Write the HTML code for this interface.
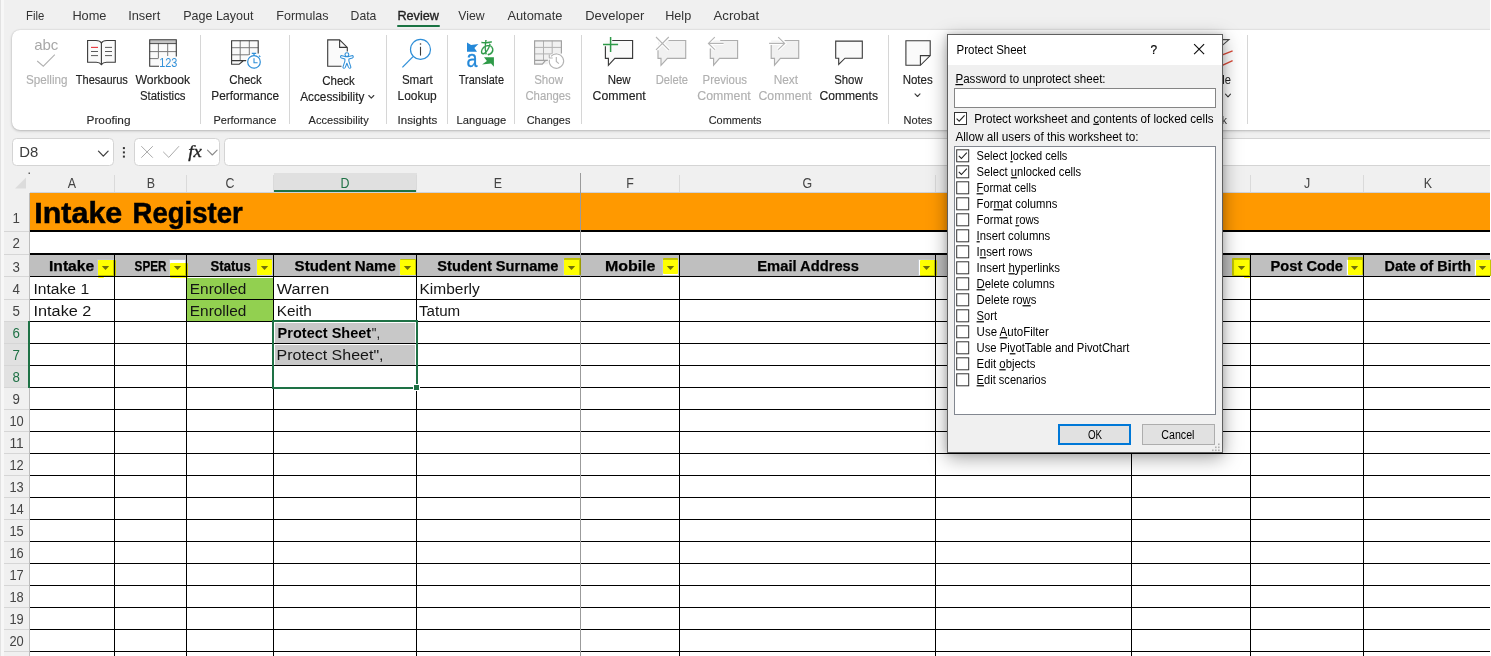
<!DOCTYPE html>
<html lang="en"><head><meta charset="utf-8"><title>Intake Register - Excel</title>
<style>
html,body{margin:0;padding:0;}
body{width:1491px;height:656px;overflow:hidden;background:#f0f0f0;position:relative;font-family:"Liberation Sans", sans-serif;}
#app div{position:absolute;box-sizing:border-box;}
#app{position:absolute;left:0;top:0;width:1491px;height:656px;overflow:hidden;}
svg{position:absolute;left:0;top:0;overflow:hidden;}
svg text{font-family:"Liberation Sans", sans-serif;white-space:pre;}
</style></head><body><div id="app">
<div style="left:0px;top:0px;width:1491px;height:656px;background:#f0f0f0;"></div>
<div style="left:0px;top:0px;width:1.3px;height:656px;background:#e2e2e2;"></div>
<div style="left:1.3px;top:0px;width:3px;height:656px;background:#f7f7f7;"></div>
<div style="left:12px;top:30px;width:1491px;height:99.5px;background:#ffffff;border-radius:8px 0 0 8px;box-shadow:0 1px 3px rgba(0,0,0,0.22),0 0 1.5px rgba(0,0,0,0.16);"></div>
<div style="left:200.0px;top:35px;width:1px;height:88.5px;background:#d6d6d6;"></div>
<div style="left:289.0px;top:35px;width:1px;height:88.5px;background:#d6d6d6;"></div>
<div style="left:386.0px;top:35px;width:1px;height:88.5px;background:#d6d6d6;"></div>
<div style="left:446.5px;top:35px;width:1px;height:88.5px;background:#d6d6d6;"></div>
<div style="left:514.0px;top:35px;width:1px;height:88.5px;background:#d6d6d6;"></div>
<div style="left:581.0px;top:35px;width:1px;height:88.5px;background:#d6d6d6;"></div>
<div style="left:888.0px;top:35px;width:1px;height:88.5px;background:#d6d6d6;"></div>
<div style="left:1246.8px;top:35px;width:1px;height:88.5px;background:#d6d6d6;"></div>
<div style="left:397px;top:24.6px;width:42.5px;height:2.2px;background:#1a7343;border-radius:1px;"></div>
<div style="left:12px;top:138px;width:102px;height:27.5px;background:#fff;border:1px solid #d4d4d4;border-radius:4.5px;"></div>
<div style="left:134px;top:138px;width:85.5px;height:27.5px;background:#fff;border:1px solid #d4d4d4;border-radius:4.5px;"></div>
<div style="left:224px;top:138px;width:1491px;height:27.5px;background:#fff;border:1px solid #d4d4d4;border-radius:4.5px;"></div>
<div style="left:4.3px;top:173px;width:1491px;height:20px;background:#f0f0f0;"></div>
<div style="left:273.5px;top:173px;width:143px;height:19px;background:#e0e0e0;"></div>
<div style="left:273.5px;top:190.3px;width:143px;height:2.2px;background:#1e7145;"></div>
<div style="left:114px;top:175px;width:1px;height:17px;background:#dadada;"></div>
<div style="left:186px;top:175px;width:1px;height:17px;background:#dadada;"></div>
<div style="left:273px;top:175px;width:1px;height:17px;background:#dadada;"></div>
<div style="left:416px;top:175px;width:1px;height:17px;background:#dadada;"></div>
<div style="left:679px;top:175px;width:1px;height:17px;background:#dadada;"></div>
<div style="left:935px;top:175px;width:1px;height:17px;background:#dadada;"></div>
<div style="left:1131px;top:175px;width:1px;height:17px;background:#dadada;"></div>
<div style="left:1250px;top:175px;width:1px;height:17px;background:#dadada;"></div>
<div style="left:1363px;top:175px;width:1px;height:17px;background:#dadada;"></div>
<div style="left:30px;top:192px;width:1491px;height:1px;background:#cfd3d8;"></div>
<div style="left:30px;top:193px;width:1491px;height:656px;background:#ffffff;"></div>
<div style="left:30px;top:193px;width:1491px;height:37px;background:#ff9900;"></div>
<div style="left:30px;top:229.8px;width:1491px;height:2.2px;background:#000;"></div>
<div style="left:30px;top:255px;width:1491px;height:21px;background:#bfbfbf;"></div>
<div style="left:30px;top:252.8px;width:1491px;height:2.2px;background:#000;"></div>
<div style="left:30px;top:275.5px;width:1491px;height:1.9px;background:#000;"></div>
<div style="left:187px;top:277.5px;width:86px;height:44px;background:#92d050;"></div>
<div style="left:275px;top:323px;width:140px;height:20px;background:#c8c8c8;"></div>
<div style="left:275px;top:345px;width:140px;height:20px;background:#c8c8c8;"></div>
<div style="left:4.3px;top:321.5px;width:25px;height:66px;background:#e1e1e1;"></div>
<div style="left:4.3px;top:231px;width:25px;height:1px;background:#d6d6d6;"></div>
<div style="left:4.3px;top:254px;width:25px;height:1px;background:#d6d6d6;"></div>
<div style="left:4.3px;top:276px;width:25px;height:1px;background:#d6d6d6;"></div>
<div style="left:4.3px;top:299px;width:25px;height:1px;background:#d6d6d6;"></div>
<div style="left:4.3px;top:321px;width:25px;height:1px;background:#d6d6d6;"></div>
<div style="left:4.3px;top:343px;width:25px;height:1px;background:#d6d6d6;"></div>
<div style="left:4.3px;top:365px;width:25px;height:1px;background:#d6d6d6;"></div>
<div style="left:4.3px;top:387px;width:25px;height:1px;background:#d6d6d6;"></div>
<div style="left:4.3px;top:409px;width:25px;height:1px;background:#d6d6d6;"></div>
<div style="left:4.3px;top:431px;width:25px;height:1px;background:#d6d6d6;"></div>
<div style="left:4.3px;top:453px;width:25px;height:1px;background:#d6d6d6;"></div>
<div style="left:4.3px;top:475px;width:25px;height:1px;background:#d6d6d6;"></div>
<div style="left:4.3px;top:497px;width:25px;height:1px;background:#d6d6d6;"></div>
<div style="left:4.3px;top:519px;width:25px;height:1px;background:#d6d6d6;"></div>
<div style="left:4.3px;top:541px;width:25px;height:1px;background:#d6d6d6;"></div>
<div style="left:4.3px;top:563px;width:25px;height:1px;background:#d6d6d6;"></div>
<div style="left:4.3px;top:585px;width:25px;height:1px;background:#d6d6d6;"></div>
<div style="left:4.3px;top:607px;width:25px;height:1px;background:#d6d6d6;"></div>
<div style="left:4.3px;top:629px;width:25px;height:1px;background:#d6d6d6;"></div>
<div style="left:4.3px;top:651px;width:25px;height:1px;background:#d6d6d6;"></div>
<div style="left:29px;top:193px;width:1px;height:656px;background:#bcbcbc;"></div>
<div style="left:28.3px;top:321px;width:1.8px;height:67px;background:#1e7145;"></div>
<div style="left:30px;top:299px;width:1491px;height:1px;background:#000;"></div>
<div style="left:30px;top:321px;width:1491px;height:1px;background:#000;"></div>
<div style="left:30px;top:343px;width:1491px;height:1px;background:#000;"></div>
<div style="left:30px;top:365px;width:1491px;height:1px;background:#000;"></div>
<div style="left:30px;top:387px;width:1491px;height:1px;background:#000;"></div>
<div style="left:30px;top:409px;width:1491px;height:1px;background:#000;"></div>
<div style="left:30px;top:431px;width:1491px;height:1px;background:#000;"></div>
<div style="left:30px;top:453px;width:1491px;height:1px;background:#000;"></div>
<div style="left:30px;top:475px;width:1491px;height:1px;background:#000;"></div>
<div style="left:30px;top:497px;width:1491px;height:1px;background:#000;"></div>
<div style="left:30px;top:519px;width:1491px;height:1px;background:#000;"></div>
<div style="left:30px;top:541px;width:1491px;height:1px;background:#000;"></div>
<div style="left:30px;top:563px;width:1491px;height:1px;background:#000;"></div>
<div style="left:30px;top:585px;width:1491px;height:1px;background:#000;"></div>
<div style="left:30px;top:607px;width:1491px;height:1px;background:#000;"></div>
<div style="left:30px;top:629px;width:1491px;height:1px;background:#000;"></div>
<div style="left:30px;top:651px;width:1491px;height:1px;background:#000;"></div>
<div style="left:114px;top:254px;width:1px;height:656px;background:#000;"></div>
<div style="left:186px;top:254px;width:1px;height:656px;background:#000;"></div>
<div style="left:273px;top:254px;width:1px;height:656px;background:#000;"></div>
<div style="left:416px;top:254px;width:1px;height:656px;background:#000;"></div>
<div style="left:679px;top:254px;width:1px;height:656px;background:#000;"></div>
<div style="left:935px;top:254px;width:1px;height:656px;background:#000;"></div>
<div style="left:1131px;top:254px;width:1px;height:656px;background:#000;"></div>
<div style="left:1250px;top:254px;width:1px;height:656px;background:#000;"></div>
<div style="left:1363px;top:254px;width:1px;height:656px;background:#000;"></div>
<div style="left:580px;top:173px;width:1px;height:656px;background:#9b9b9b;"></div>
<div style="left:1490.2px;top:0px;width:1px;height:656px;background:#ffffff;"></div>
<div style="left:97.3px;top:259.3px;width:16.9px;height:16.7px;background:#fff;border:1px solid #c3c7ce;"></div>
<div style="left:169.3px;top:259.3px;width:16.9px;height:16.7px;background:#fff;border:1px solid #c3c7ce;"></div>
<div style="left:256.3px;top:259.3px;width:16.9px;height:16.7px;background:#fff;border:1px solid #c3c7ce;"></div>
<div style="left:399.3px;top:259.3px;width:16.9px;height:16.7px;background:#fff;border:1px solid #c3c7ce;"></div>
<div style="left:563.3px;top:259.3px;width:16.9px;height:16.7px;background:#fff;border:1px solid #c3c7ce;"></div>
<div style="left:662.3px;top:259.3px;width:16.9px;height:16.7px;background:#fff;border:1px solid #c3c7ce;"></div>
<div style="left:918.3px;top:259.3px;width:16.9px;height:16.7px;background:#fff;border:1px solid #c3c7ce;"></div>
<div style="left:1233.3px;top:259.3px;width:16.9px;height:16.7px;background:#fff;border:1px solid #c3c7ce;"></div>
<div style="left:1346.3px;top:259.3px;width:16.9px;height:16.7px;background:#fff;border:1px solid #c3c7ce;"></div>
<div style="left:1474.3px;top:259.3px;width:16.9px;height:16.7px;background:#fff;border:1px solid #c3c7ce;"></div>
<div style="left:97.7px;top:260.1px;width:18.1px;height:16.1px;background:#ffff00;mix-blend-mode:multiply;border-radius:1px;"></div>
<div style="left:97.7px;top:276px;width:6.5px;height:1.8px;background:#ffff00;mix-blend-mode:multiply;border-radius:1px;"></div>
<div style="left:170px;top:262.8px;width:18px;height:15.7px;background:#ffff00;mix-blend-mode:multiply;border-radius:1px;"></div>
<div style="left:256.8px;top:259.1px;width:15.7px;height:16.4px;background:#ffff00;mix-blend-mode:multiply;border-radius:1px;"></div>
<div style="left:400px;top:259.1px;width:15.8px;height:16.4px;background:#ffff00;mix-blend-mode:multiply;border-radius:1px;"></div>
<div style="left:563.9px;top:258.3px;width:16.7px;height:17.2px;background:#ffff00;mix-blend-mode:multiply;border-radius:1px;"></div>
<div style="left:662.9px;top:258.3px;width:15.3px;height:15.9px;background:#ffff00;mix-blend-mode:multiply;border-radius:1px;"></div>
<div style="left:919.8px;top:259.8px;width:17.3px;height:16.2px;background:#ffff00;mix-blend-mode:multiply;border-radius:1px;"></div>
<div style="left:1232.1px;top:258px;width:17.9px;height:18px;background:#ffff00;mix-blend-mode:multiply;border-radius:1px;"></div>
<div style="left:1244px;top:276.5px;width:7px;height:1.5px;background:#ffff00;mix-blend-mode:multiply;border-radius:1px;"></div>
<div style="left:1347.9px;top:256.9px;width:15.2px;height:18px;background:#ffff00;mix-blend-mode:multiply;border-radius:1px;"></div>
<div style="left:1475.9px;top:259.8px;width:16px;height:16.2px;background:#ffff00;mix-blend-mode:multiply;border-radius:1px;"></div>
<div style="left:272.3px;top:320.2px;width:145.5px;height:68.5px;background:transparent;border:2px solid #1e7145;"></div>
<div style="left:413px;top:384.3px;width:6.5px;height:6.5px;background:#fff;"></div>
<div style="left:414px;top:385.3px;width:5px;height:5px;background:#1e7145;"></div>
<svg width="1491" height="656" viewBox="0 0 1491 656">
<text x="26.0" y="20.1" font-size="13" fill="#333333" textLength="18.3" lengthAdjust="spacingAndGlyphs">File</text>
<text x="72.4" y="20.1" font-size="13" fill="#333333" textLength="34.1" lengthAdjust="spacingAndGlyphs">Home</text>
<text x="128.2" y="20.1" font-size="13" fill="#333333" textLength="32.0" lengthAdjust="spacingAndGlyphs">Insert</text>
<text x="183.2" y="20.1" font-size="13" fill="#333333" textLength="70.3" lengthAdjust="spacingAndGlyphs">Page Layout</text>
<text x="276.3" y="20.1" font-size="13" fill="#333333" textLength="52.3" lengthAdjust="spacingAndGlyphs">Formulas</text>
<text x="350.6" y="20.1" font-size="13" fill="#333333" textLength="25.8" lengthAdjust="spacingAndGlyphs">Data</text>
<text x="458.3" y="20.1" font-size="13" fill="#333333" textLength="26.3" lengthAdjust="spacingAndGlyphs">View</text>
<text x="507.4" y="20.1" font-size="13" fill="#333333" textLength="55.0" lengthAdjust="spacingAndGlyphs">Automate</text>
<text x="585.2" y="20.1" font-size="13" fill="#333333" textLength="59.1" lengthAdjust="spacingAndGlyphs">Developer</text>
<text x="665.2" y="20.1" font-size="13" fill="#333333" textLength="26.0" lengthAdjust="spacingAndGlyphs">Help</text>
<text x="713.5" y="20.1" font-size="13" fill="#333333" textLength="45.6" lengthAdjust="spacingAndGlyphs">Acrobat</text>
<text x="397.4" y="20.1" font-size="13" fill="#1f1f1f" textLength="41.6" lengthAdjust="spacingAndGlyphs" stroke="#1f1f1f" stroke-width="0.35">Review</text>
<text x="26.0" y="83.8" font-size="12.3" fill="#b0b0b0" textLength="41.5" lengthAdjust="spacingAndGlyphs" stroke="#b0b0b0" stroke-width="0.15">Spelling</text>
<text x="75.8" y="83.8" font-size="12.3" fill="#222222" textLength="52.1" lengthAdjust="spacingAndGlyphs" stroke="#222222" stroke-width="0.15">Thesaurus</text>
<text x="135.5" y="83.8" font-size="12.3" fill="#222222" textLength="54.5" lengthAdjust="spacingAndGlyphs" stroke="#222222" stroke-width="0.15">Workbook</text>
<text x="140.0" y="99.8" font-size="12.3" fill="#222222" textLength="45.5" lengthAdjust="spacingAndGlyphs" stroke="#222222" stroke-width="0.15">Statistics</text>
<text x="229.2" y="83.8" font-size="12.3" fill="#222222" textLength="32.6" lengthAdjust="spacingAndGlyphs" stroke="#222222" stroke-width="0.15">Check</text>
<text x="211.3" y="99.8" font-size="12.3" fill="#222222" textLength="67.7" lengthAdjust="spacingAndGlyphs" stroke="#222222" stroke-width="0.15">Performance</text>
<text x="322.2" y="84.7" font-size="12.3" fill="#222222" textLength="32.6" lengthAdjust="spacingAndGlyphs" stroke="#222222" stroke-width="0.15">Check</text>
<text x="300.2" y="100.6" font-size="12.3" fill="#222222" textLength="64.2" lengthAdjust="spacingAndGlyphs" stroke="#222222" stroke-width="0.15">Accessibility</text>
<text x="401.9" y="83.8" font-size="12.3" fill="#222222" textLength="30.8" lengthAdjust="spacingAndGlyphs" stroke="#222222" stroke-width="0.15">Smart</text>
<text x="397.5" y="99.8" font-size="12.3" fill="#222222" textLength="39.2" lengthAdjust="spacingAndGlyphs" stroke="#222222" stroke-width="0.15">Lookup</text>
<text x="458.8" y="83.8" font-size="12.3" fill="#222222" textLength="45.2" lengthAdjust="spacingAndGlyphs" stroke="#222222" stroke-width="0.15">Translate</text>
<text x="534.2" y="83.8" font-size="12.3" fill="#b0b0b0" textLength="28.8" lengthAdjust="spacingAndGlyphs" stroke="#b0b0b0" stroke-width="0.15">Show</text>
<text x="525.4" y="99.8" font-size="12.3" fill="#b0b0b0" textLength="45.4" lengthAdjust="spacingAndGlyphs" stroke="#b0b0b0" stroke-width="0.15">Changes</text>
<text x="607.7" y="83.8" font-size="12.3" fill="#222222" textLength="22.9" lengthAdjust="spacingAndGlyphs" stroke="#222222" stroke-width="0.15">New</text>
<text x="592.6" y="99.8" font-size="12.3" fill="#222222" textLength="53.2" lengthAdjust="spacingAndGlyphs" stroke="#222222" stroke-width="0.15">Comment</text>
<text x="655.7" y="83.8" font-size="12.3" fill="#b0b0b0" textLength="32.3" lengthAdjust="spacingAndGlyphs" stroke="#b0b0b0" stroke-width="0.15">Delete</text>
<text x="702.6" y="83.8" font-size="12.3" fill="#b0b0b0" textLength="44.4" lengthAdjust="spacingAndGlyphs" stroke="#b0b0b0" stroke-width="0.15">Previous</text>
<text x="697.3" y="99.8" font-size="12.3" fill="#b0b0b0" textLength="53.4" lengthAdjust="spacingAndGlyphs" stroke="#b0b0b0" stroke-width="0.15">Comment</text>
<text x="773.7" y="83.8" font-size="12.3" fill="#b0b0b0" textLength="24.4" lengthAdjust="spacingAndGlyphs" stroke="#b0b0b0" stroke-width="0.15">Next</text>
<text x="758.5" y="99.8" font-size="12.3" fill="#b0b0b0" textLength="53.2" lengthAdjust="spacingAndGlyphs" stroke="#b0b0b0" stroke-width="0.15">Comment</text>
<text x="834.2" y="83.8" font-size="12.3" fill="#222222" textLength="28.4" lengthAdjust="spacingAndGlyphs" stroke="#222222" stroke-width="0.15">Show</text>
<text x="819.4" y="99.8" font-size="12.3" fill="#222222" textLength="58.6" lengthAdjust="spacingAndGlyphs" stroke="#222222" stroke-width="0.15">Comments</text>
<text x="902.7" y="83.8" font-size="12.3" fill="#222222" textLength="30.0" lengthAdjust="spacingAndGlyphs" stroke="#222222" stroke-width="0.15">Notes</text>
<text x="86.5" y="123.5" font-size="11.8" fill="#262626" textLength="44.0" lengthAdjust="spacingAndGlyphs" stroke="#262626" stroke-width="0.12">Proofing</text>
<text x="213.5" y="123.5" font-size="11.8" fill="#262626" textLength="62.8" lengthAdjust="spacingAndGlyphs" stroke="#262626" stroke-width="0.12">Performance</text>
<text x="308.6" y="123.5" font-size="11.8" fill="#262626" textLength="60.1" lengthAdjust="spacingAndGlyphs" stroke="#262626" stroke-width="0.12">Accessibility</text>
<text x="397.5" y="123.5" font-size="11.8" fill="#262626" textLength="39.8" lengthAdjust="spacingAndGlyphs" stroke="#262626" stroke-width="0.12">Insights</text>
<text x="456.6" y="123.5" font-size="11.8" fill="#262626" textLength="49.7" lengthAdjust="spacingAndGlyphs" stroke="#262626" stroke-width="0.12">Language</text>
<text x="526.7" y="123.5" font-size="11.8" fill="#262626" textLength="43.7" lengthAdjust="spacingAndGlyphs" stroke="#262626" stroke-width="0.12">Changes</text>
<text x="708.7" y="123.5" font-size="11.8" fill="#262626" textLength="52.8" lengthAdjust="spacingAndGlyphs" stroke="#262626" stroke-width="0.12">Comments</text>
<text x="903.6" y="123.5" font-size="11.8" fill="#262626" textLength="28.8" lengthAdjust="spacingAndGlyphs" stroke="#262626" stroke-width="0.12">Notes</text>
<text x="1208.0" y="83.8" font-size="12.3" fill="#222222" textLength="23.0" lengthAdjust="spacingAndGlyphs">Hide</text>
<text x="1213.0" y="123.5" font-size="11.8" fill="#3a3a3a" textLength="14.0" lengthAdjust="spacingAndGlyphs">Ink</text>
<path d="M368.8 95.5 L371.3 98.1 L373.8 95.5" fill="none" stroke="#3a3a3a" stroke-width="1.1" stroke-linecap="round" stroke-linejoin="round"/>
<path d="M915.0 93.9 L917.5 96.5 L920.0 93.9" fill="none" stroke="#3a3a3a" stroke-width="1.1" stroke-linecap="round" stroke-linejoin="round"/>
<path d="M1225.5 94.2 L1228.0 96.8 L1230.5 94.2" fill="none" stroke="#3a3a3a" stroke-width="1.1" stroke-linecap="round" stroke-linejoin="round"/>
<text x="19.3" y="156.7" font-size="14.4" fill="#3b3b3b" textLength="19.0" lengthAdjust="spacingAndGlyphs">D8</text>
<path d="M98.5 151.1 L103.3 156.1 L108.1 151.1" fill="none" stroke="#404040" stroke-width="1.3" stroke-linecap="round" stroke-linejoin="round"/>
<rect x="122.9" y="147.1" width="2" height="2" fill="#333"/>
<rect x="122.9" y="151.4" width="2" height="2" fill="#333"/>
<rect x="122.9" y="155.6" width="2" height="2" fill="#333"/>
<path d="M141.3 146.2 L152.8 157.7 M152.8 146.2 L141.3 157.7" stroke="#ababab" stroke-width="1" fill="none"/>
<path d="M163.2 151.8 L168.8 157.4 L179 146.2" stroke="#ababab" stroke-width="1" fill="none"/>
<text x="188.3" y="156.9" font-size="17.5" fill="#222" style='font-family:"Liberation Serif", serif' font-style="italic" textLength="13.5" lengthAdjust="spacingAndGlyphs" stroke="#222" stroke-width="0.35">fx</text>
<path d="M207.5 150.2 L212.3 155.0 L217.1 150.2" fill="none" stroke="#8a8a8a" stroke-width="1.1" stroke-linecap="round" stroke-linejoin="round"/>
<path d="M26 177.5 L26 188.5 L15 188.5 Z" fill="#dcdcdc"/>
<rect x="28.6" y="172.6" width="1.2" height="1.2" fill="#111"/>
<text x="72.0" y="187.9" font-size="13.8" fill="#444444" transform="translate(72.0 0) scale(0.9 1) translate(-72.0 0)" text-anchor="middle">A</text>
<text x="151.0" y="187.9" font-size="13.8" fill="#444444" transform="translate(151.0 0) scale(0.9 1) translate(-151.0 0)" text-anchor="middle">B</text>
<text x="230.0" y="187.9" font-size="13.8" fill="#444444" transform="translate(230.0 0) scale(0.9 1) translate(-230.0 0)" text-anchor="middle">C</text>
<text x="498.0" y="187.9" font-size="13.8" fill="#444444" transform="translate(498.0 0) scale(0.9 1) translate(-498.0 0)" text-anchor="middle">E</text>
<text x="630.0" y="187.9" font-size="13.8" fill="#444444" transform="translate(630.0 0) scale(0.9 1) translate(-630.0 0)" text-anchor="middle">F</text>
<text x="807.3" y="187.9" font-size="13.8" fill="#444444" transform="translate(807.3 0) scale(0.9 1) translate(-807.3 0)" text-anchor="middle">G</text>
<text x="1307.2" y="187.9" font-size="13.8" fill="#444444" transform="translate(1307.2 0) scale(0.9 1) translate(-1307.2 0)" text-anchor="middle">J</text>
<text x="1428.0" y="187.9" font-size="13.8" fill="#444444" transform="translate(1428.0 0) scale(0.9 1) translate(-1428.0 0)" text-anchor="middle">K</text>
<text x="345.0" y="187.9" font-size="13.8" fill="#1e7145" transform="translate(345.0 0) scale(0.9 1) translate(-345.0 0)" text-anchor="middle">D</text>
<text x="12.5" y="223.0" font-size="13.8" fill="#444444" textLength="7.4" lengthAdjust="spacingAndGlyphs">1</text>
<text x="12.5" y="248.0" font-size="13.8" fill="#444444" textLength="7.4" lengthAdjust="spacingAndGlyphs">2</text>
<text x="12.5" y="271.5" font-size="13.8" fill="#444444" textLength="7.4" lengthAdjust="spacingAndGlyphs">3</text>
<text x="12.5" y="293.5" font-size="13.8" fill="#444444" textLength="7.4" lengthAdjust="spacingAndGlyphs">4</text>
<text x="12.5" y="315.5" font-size="13.8" fill="#444444" textLength="7.4" lengthAdjust="spacingAndGlyphs">5</text>
<text x="12.5" y="337.5" font-size="13.8" fill="#1e7145" textLength="7.4" lengthAdjust="spacingAndGlyphs">6</text>
<text x="12.5" y="359.5" font-size="13.8" fill="#1e7145" textLength="7.4" lengthAdjust="spacingAndGlyphs">7</text>
<text x="12.5" y="381.5" font-size="13.8" fill="#1e7145" textLength="7.4" lengthAdjust="spacingAndGlyphs">8</text>
<text x="12.5" y="403.5" font-size="13.8" fill="#444444" textLength="7.4" lengthAdjust="spacingAndGlyphs">9</text>
<text x="9.4" y="425.5" font-size="13.8" fill="#444444" textLength="14.3" lengthAdjust="spacingAndGlyphs">10</text>
<text x="9.4" y="447.5" font-size="13.8" fill="#444444" textLength="14.3" lengthAdjust="spacingAndGlyphs">11</text>
<text x="9.4" y="469.5" font-size="13.8" fill="#444444" textLength="14.3" lengthAdjust="spacingAndGlyphs">12</text>
<text x="9.4" y="491.5" font-size="13.8" fill="#444444" textLength="14.3" lengthAdjust="spacingAndGlyphs">13</text>
<text x="9.4" y="513.5" font-size="13.8" fill="#444444" textLength="14.3" lengthAdjust="spacingAndGlyphs">14</text>
<text x="9.4" y="535.5" font-size="13.8" fill="#444444" textLength="14.3" lengthAdjust="spacingAndGlyphs">15</text>
<text x="9.4" y="557.5" font-size="13.8" fill="#444444" textLength="14.3" lengthAdjust="spacingAndGlyphs">16</text>
<text x="9.4" y="579.5" font-size="13.8" fill="#444444" textLength="14.3" lengthAdjust="spacingAndGlyphs">17</text>
<text x="9.4" y="601.5" font-size="13.8" fill="#444444" textLength="14.3" lengthAdjust="spacingAndGlyphs">18</text>
<text x="9.4" y="623.5" font-size="13.8" fill="#444444" textLength="14.3" lengthAdjust="spacingAndGlyphs">19</text>
<text x="9.4" y="645.5" font-size="13.8" fill="#444444" textLength="14.3" lengthAdjust="spacingAndGlyphs">20</text>
<text x="34.3" y="222.5" font-size="29.2" fill="#000" font-weight="700" textLength="88.0" lengthAdjust="spacingAndGlyphs" stroke="#000" stroke-width="0.5">Intake</text>
<text x="132.6" y="222.5" font-size="29.2" fill="#000" font-weight="700" textLength="110.2" lengthAdjust="spacingAndGlyphs" stroke="#000" stroke-width="0.5">Register</text>
<text x="49.0" y="270.8" font-size="14.67" fill="#000" font-weight="700" textLength="45.2" lengthAdjust="spacingAndGlyphs" stroke="#000" stroke-width="0.25">Intake</text>
<text x="134.6" y="270.8" font-size="14.67" fill="#000" font-weight="700" textLength="31.8" lengthAdjust="spacingAndGlyphs" stroke="#000" stroke-width="0.25">SPER</text>
<text x="210.5" y="270.8" font-size="14.67" fill="#000" font-weight="700" textLength="40.2" lengthAdjust="spacingAndGlyphs" stroke="#000" stroke-width="0.25">Status</text>
<text x="294.6" y="270.8" font-size="14.67" fill="#000" font-weight="700" textLength="101.3" lengthAdjust="spacingAndGlyphs" stroke="#000" stroke-width="0.25">Student Name</text>
<text x="437.3" y="270.8" font-size="14.67" fill="#000" font-weight="700" textLength="121.2" lengthAdjust="spacingAndGlyphs" stroke="#000" stroke-width="0.25">Student Surname</text>
<text x="604.9" y="270.8" font-size="14.67" fill="#000" font-weight="700" textLength="50.5" lengthAdjust="spacingAndGlyphs" stroke="#000" stroke-width="0.25">Mobile</text>
<text x="757.3" y="270.8" font-size="14.67" fill="#000" font-weight="700" textLength="101.7" lengthAdjust="spacingAndGlyphs" stroke="#000" stroke-width="0.25">Email Address</text>
<text x="1270.6" y="270.8" font-size="14.67" fill="#000" font-weight="700" textLength="72.4" lengthAdjust="spacingAndGlyphs" stroke="#000" stroke-width="0.25">Post Code</text>
<text x="1384.5" y="270.8" font-size="14.67" fill="#000" font-weight="700" textLength="86.5" lengthAdjust="spacingAndGlyphs" stroke="#000" stroke-width="0.25">Date of Birth</text>
<text x="33.5" y="293.8" font-size="14.67" fill="#141414" textLength="55.6" lengthAdjust="spacingAndGlyphs">Intake 1</text>
<text x="33.5" y="315.8" font-size="14.67" fill="#141414" textLength="57.9" lengthAdjust="spacingAndGlyphs">Intake 2</text>
<text x="189.8" y="293.8" font-size="14.67" fill="#141414" textLength="56.5" lengthAdjust="spacingAndGlyphs">Enrolled</text>
<text x="189.8" y="315.8" font-size="14.67" fill="#141414" textLength="56.5" lengthAdjust="spacingAndGlyphs">Enrolled</text>
<text x="276.8" y="293.8" font-size="14.67" fill="#141414" textLength="52.5" lengthAdjust="spacingAndGlyphs">Warren</text>
<text x="276.8" y="315.8" font-size="14.67" fill="#141414" textLength="34.9" lengthAdjust="spacingAndGlyphs">Keith</text>
<text x="419.5" y="293.8" font-size="14.67" fill="#141414" textLength="60.3" lengthAdjust="spacingAndGlyphs">Kimberly</text>
<text x="419.0" y="315.8" font-size="14.67" fill="#141414" textLength="41.2" lengthAdjust="spacingAndGlyphs">Tatum</text>
<text x="277.6" y="337.9" font-size="14.67" fill="#000" font-weight="700" textLength="93.6" lengthAdjust="spacingAndGlyphs">Protect Sheet</text>
<text x="371.8" y="337.9" font-size="14.67" fill="#141414" textLength="8.2" lengthAdjust="spacingAndGlyphs">",</text>
<text x="276.5" y="360.0" font-size="14.67" fill="#141414" textLength="107.0" lengthAdjust="spacingAndGlyphs">Protect Sheet",</text>
<path d="M101.8 266 L109.2 266 L105.5 269.9 Z" fill="#70700a"/>
<path d="M173.8 266 L181.2 266 L177.5 269.9 Z" fill="#70700a"/>
<path d="M260.8 266 L268.2 266 L264.5 269.9 Z" fill="#70700a"/>
<path d="M403.8 266 L411.2 266 L407.5 269.9 Z" fill="#70700a"/>
<path d="M567.8 266 L575.2 266 L571.5 269.9 Z" fill="#70700a"/>
<path d="M666.8 266 L674.2 266 L670.5 269.9 Z" fill="#70700a"/>
<path d="M922.8 266 L930.2 266 L926.5 269.9 Z" fill="#70700a"/>
<path d="M1237.8 266 L1245.2 266 L1241.5 269.9 Z" fill="#70700a"/>
<path d="M1350.8 266 L1358.2 266 L1354.5 269.9 Z" fill="#70700a"/>
<path d="M1478.8 266 L1486.2 266 L1482.5 269.9 Z" fill="#70700a"/>
<g fill="none" stroke-linecap="butt" stroke-linejoin="miter">
<!-- Spelling (disabled) -->
<text x="34.2" y="50.4" font-size="14.3" fill="#a8a8a8" textLength="24.2" lengthAdjust="spacingAndGlyphs">abc</text>
<path d="M37.2 61 L43.3 66.2 L54.8 54.6" stroke="#b2b2b2" stroke-width="1.1"/>
<!-- Thesaurus -->
<path d="M87.6 40.5 H96 Q100 40.5 101.4 43 Q102.8 40.5 106.8 40.5 H115.3 V62.3 H106.5 Q103 62.3 101.4 64.6 Q99.8 62.3 96.3 62.3 H87.6 Z" fill="#fafafa" stroke="#3a3a3a" stroke-width="1.1"/>
<path d="M101.4 43 V64.3" stroke="#3a3a3a" stroke-width="1.1"/>
<path d="M91 47.4 H98" stroke="#e8333a" stroke-width="1.1"/>
<path d="M91 51.5 H98 M91 55.6 H98 M105 47.4 H112 M105 51.5 H112 M105 55.6 H112" stroke="#5a5a5a" stroke-width="1"/>
<!-- Workbook statistics -->
<rect x="149.7" y="39.7" width="26.6" height="26.6" fill="#fafafa" stroke="none"/>
<rect x="149.7" y="39.7" width="26.6" height="3.8" fill="#c4c4c4" stroke="none"/>
<path d="M149.7 51.6 H176.3 M149.7 58.6 H158.5 M158.4 43.5 V58 M167.7 43.5 V56" stroke="#7a7a7a" stroke-width="1"/>
<path d="M176.3 56.5 V39.7 H149.7 V66.3 H159" stroke="#3a3a3a" stroke-width="1.1"/>
<path d="M149.7 43.6 H176.3" stroke="#3a3a3a" stroke-width="0.9"/>
<text x="159.2" y="66.6" font-size="12.8" fill="#2f8fd8" textLength="18.2" lengthAdjust="spacingAndGlyphs">123</text>
<!-- Check performance -->
<path d="M231.6 40.7 H258.2 V56 L247 60.6 H243.6 L239.2 64.2 H231.6 Z" fill="#fafafa" stroke="none"/>
<path d="M231.6 47.7 H258.2 M231.6 54.8 H250 M240.2 40.7 V60.6 M249.3 40.7 V55" stroke="#7a7a7a" stroke-width="1"/>
<path d="M258.2 53.5 V40.7 H231.6 V64.2 H239.2 L243.6 60.6 H247.5 M231.6 60.6 H243.6" stroke="#3a3a3a" stroke-width="1.1"/>
<circle cx="254" cy="61.5" r="8" fill="#fff" stroke="none"/>
<circle cx="254" cy="61.9" r="6.3" fill="#fff" stroke="#2f8fd8" stroke-width="1.2"/>
<path d="M251.8 53.4 H256.2 M254 53.6 V55.6 M259 55.6 L260.3 56.9" stroke="#2f8fd8" stroke-width="1.3"/>
<path d="M254 58.2 V62.8 H257.6" stroke="#2f8fd8" stroke-width="1.1"/>
<!-- Check accessibility -->
<path d="M327.7 39.9 H339.6 L347.3 47.4 V52 L341 66.2 H327.7 Z" fill="#fafafa" stroke="none"/>
<path d="M347.3 51.5 V47.4 L339.6 39.9 H327.7 V66.2 H341.5 M339.6 39.9 V47.4 H347.3" stroke="#3a3a3a" stroke-width="1.1"/>
<circle cx="346.9" cy="54.6" r="1.9" fill="#fff" stroke="#2f8fd8" stroke-width="1.1"/>
<path d="M340.6 56.2 Q340.2 57.6 341.4 58 L344.9 58.9 V61.2 L343 66.8 Q342.7 68 344 68.2 Q344.9 68.3 345.3 67.4 L346.9 63.2 L348.5 67.4 Q348.9 68.3 349.8 68.2 Q351.1 68 350.8 66.8 L348.9 61.2 V58.9 L352.4 58 Q353.6 57.6 353.2 56.2 Q352.8 55.4 351.8 55.7 L348.6 56.6 H345.2 L342 55.7 Q341 55.4 340.6 56.2 Z" fill="#fff" stroke="#2f8fd8" stroke-width="1.05" stroke-linejoin="round"/>
<!-- Smart lookup -->
<circle cx="420.5" cy="49.4" r="10" fill="#fff" stroke="#2f8fd8" stroke-width="1.2"/>
<path d="M413 56.6 L402.4 67.4" stroke="#2f8fd8" stroke-width="1.3"/>
<path d="M420.5 46.8 V55.6" stroke="#3a3a3a" stroke-width="1.1"/>
<circle cx="420.5" cy="44" r="0.8" fill="#3a3a3a" stroke="none"/>
<!-- Translate -->
<path d="M467 42.5 L471.1 45.1 L478.4 44 L474.4 48 L477 51.7 L467 51.7 Z" fill="#2488d8" stroke="none"/>
<text x="479.2" y="54.4" font-size="17.6" font-weight="400" stroke="#2e9a48" stroke-width="0.2" fill="#2e9a48" style='font-family:"Liberation Sans","Noto Sans CJK JP",sans-serif' textLength="15.6" lengthAdjust="spacingAndGlyphs">あ</text>
<text x="466.4" y="66.6" font-size="23.5" fill="#2488d8" stroke="#2488d8" stroke-width="0.3" textLength="11" lengthAdjust="spacingAndGlyphs">a</text>
<path d="M484 57.2 L493.9 57.2 L493.9 66.8 L491 63.5 L482.1 64.4 L486.9 61 Z" fill="#2e9a48" stroke="none"/>
<!-- Show changes (disabled) -->
<path d="M534.6 40.8 H561.4 V56 L548 64.2 H534.6 Z" fill="#f1f1f1" stroke="none"/>
<path d="M534.6 47.4 H561.4 M534.6 53.9 H552 M543.5 40.8 V60.2 M552.2 40.8 V54" stroke="#b2b2b2" stroke-width="1"/>
<path d="M561.4 53.5 V40.8 H534.6 V64.2 H542.3 L545.6 60.3 H548 M534.6 60.3 H545.6" stroke="#a0a0a0" stroke-width="1.15"/>
<circle cx="556.3" cy="61.3" r="8.6" fill="#fff" stroke="none"/>
<path d="M551 56.4 A7.2 7.2 0 1 1 549.4 59.6" stroke="#b4b4b4" stroke-width="1.1"/>
<path d="M549.3 54.6 V58 H552.7" stroke="#b4b4b4" stroke-width="1.1"/>
<path d="M556.3 56.9 V61.5 L558.9 63.6" stroke="#b4b4b4" stroke-width="1.1"/>
<!-- New comment -->
<path d="M605.4 40.5 H632.6 V58.3 H614.8 L608.4 65.3 V58.3 H605.4 Z" fill="#fafafa" stroke="none"/>
<path d="M612.2 40.5 H632.6 V58.3 H614.8 L608.4 65.3 V58.3 H605.4 V46.2" stroke="#3a3a3a" stroke-width="1.15"/>
<path d="M610.6 37 V52.1 M603 44.6 H618.1" stroke="#2e9a48" stroke-width="1.5"/>
<!-- Delete (disabled) -->
<path d="M658 40.5 H685.7 V58.3 H667.4 L661 65.3 V58.3 H658 Z" fill="#f1f1f1" stroke="none"/>
<path d="M656 37 L668.8 49.8 M668.8 37 L656 49.8" stroke="#fff" stroke-width="3.4"/>
<path d="M668.5 40.5 H685.7 V58.3 H667.4 L661 65.3 V58.3 H658 V50.2" stroke="#adadad" stroke-width="1.15"/>
<path d="M656 37 L668.8 49.8 M668.8 37 L656 49.8" stroke="#b4b4b4" stroke-width="1.1"/>
<!-- Previous comment (disabled) -->
<path d="M710.3 40.5 H737.6 V58.3 H719.5 L713.6 65.2 V58.3 H710.3 Z" fill="#f1f1f1" stroke="none"/>
<path d="M723.6 43.4 H708.3 M714.8 37.1 L708.3 43.4 L714.8 49.6" stroke="#fff" stroke-width="3.4"/>
<path d="M720.2 40.5 H737.6 V58.3 H719.5 L713.6 65.2 V58.3 H710.3 V48.5" stroke="#adadad" stroke-width="1.15"/>
<path d="M723.6 43.4 H708.5 M714.8 37.1 L708.4 43.4 L714.8 49.6" stroke="#b4b4b4" stroke-width="1.1"/>
<!-- Next comment (disabled) -->
<path d="M771.2 40.5 H798.7 V58.3 H780.4 L774.5 65.2 V58.3 H771.2 Z" fill="#f1f1f1" stroke="none"/>
<path d="M769.1 43.4 H784.6 M778.2 37.1 L784.7 43.4 L778.2 49.6" stroke="#fff" stroke-width="3.4"/>
<path d="M784.6 40.5 H798.7 V58.3 H780.4 L774.5 65.2 V58.3 H771.2 V45" stroke="#adadad" stroke-width="1.15"/>
<path d="M769.1 43.4 H784.6 M778.2 37.1 L784.7 43.4 L778.2 49.6" stroke="#b4b4b4" stroke-width="1.1"/>
<!-- Show comments -->
<path d="M835.7 41.1 H862.3 V58.2 H845 L838.7 64.4 V58.2 H835.7 Z" fill="#fafafa" stroke="#3a3a3a" stroke-width="1.1"/>
<!-- Notes -->
<path d="M905.9 40.8 H930.2 V55.6 L920.4 65.3 H905.9 Z" fill="#fafafa" stroke="#3a3a3a" stroke-width="1.1"/>
<path d="M920.4 65.3 V55.6 H930.2" stroke="#3a3a3a" stroke-width="1.1"/>
<!-- Hide ink (mostly hidden) -->
<path d="M1216 39.6 H1229 L1222 45.6" stroke="#4a4a4a" stroke-width="1.1"/>
<path d="M1218 56.6 L1232.6 50.8 M1218 67.4 L1232.6 60.6" stroke="#dc4a38" stroke-width="1.4"/>
</g>
</svg>
<div style="left:947px;top:34.2px;width:275.5px;height:418.8px;background:#f0f0f0;border:1px solid #5f5f5f;box-shadow:0 5px 18px rgba(0,0,0,0.36),0 0 6px rgba(0,0,0,0.17);"></div>
<div style="left:948px;top:35.2px;width:273.5px;height:29.5px;background:#ffffff;"></div>
<div style="left:954px;top:88px;width:262px;height:20px;background:#fff;border:1px solid #858585;"></div>
<div style="left:954px;top:146px;width:262px;height:269px;background:#fff;border:1px solid #828790;"></div>
<div style="left:1058px;top:424px;width:73px;height:21px;background:#e1e1e1;border:2px solid #0078d7;"></div>
<div style="left:1142px;top:424px;width:73px;height:21px;background:#e1e1e1;border:1px solid #adadad;"></div>
<svg width="1491" height="656" viewBox="0 0 1491 656">
<text x="956.5" y="54.0" font-size="12" fill="#000" textLength="69.7" lengthAdjust="spacingAndGlyphs">Protect Sheet</text>
<text x="1150.4" y="54.0" font-size="13.6" fill="#000" textLength="6.6" lengthAdjust="spacingAndGlyphs" stroke="#000" stroke-width="0.2">?</text>
<path d="M1194.1 44.1 L1204.1 54.1 M1204.1 44.1 L1194.1 54.1" stroke="#111" stroke-width="1.15" fill="none"/>
<text x="955.4" y="83.0" font-size="12" fill="#000" textLength="150.2" lengthAdjust="spacingAndGlyphs"><tspan text-decoration="underline">P</tspan>assword to unprotect sheet:</text>
<text x="974.3" y="122.7" font-size="12" fill="#000" textLength="239.3" lengthAdjust="spacingAndGlyphs">Protect worksheet and <tspan text-decoration="underline">c</tspan>ontents of locked cells</text>
<text x="955.4" y="140.5" font-size="12" fill="#000" textLength="183.1" lengthAdjust="spacingAndGlyphs">Allow all users of this worksheet to:</text>
<rect x="954.5" y="112.5" width="12" height="12" fill="#fff" stroke="#333" stroke-width="1"/>
<path d="M956.6 118.6 L959.2 121.2 L964.6 115.4" fill="none" stroke="#222" stroke-width="1.1"/>
<rect x="956.7" y="149.8" width="12" height="12" fill="#fff" stroke="#333" stroke-width="1"/>
<path d="M958.8 155.9 L961.4 158.5 L966.8 152.7" fill="none" stroke="#222" stroke-width="1.1"/>
<text x="976.6" y="160.2" font-size="12" fill="#000" textLength="90.8" lengthAdjust="spacingAndGlyphs">Select <tspan text-decoration="underline">l</tspan>ocked cells</text>
<rect x="956.7" y="165.8" width="12" height="12" fill="#fff" stroke="#333" stroke-width="1"/>
<path d="M958.8 171.9 L961.4 174.5 L966.8 168.7" fill="none" stroke="#222" stroke-width="1.1"/>
<text x="976.6" y="176.2" font-size="12" fill="#000" textLength="104.6" lengthAdjust="spacingAndGlyphs">Select <tspan text-decoration="underline">u</tspan>nlocked cells</text>
<rect x="956.7" y="181.8" width="12" height="12" fill="#fff" stroke="#333" stroke-width="1"/>
<text x="976.6" y="192.2" font-size="12" fill="#000" textLength="59.8" lengthAdjust="spacingAndGlyphs"><tspan text-decoration="underline">F</tspan>ormat cells</text>
<rect x="956.7" y="197.8" width="12" height="12" fill="#fff" stroke="#333" stroke-width="1"/>
<text x="976.6" y="208.2" font-size="12" fill="#000" textLength="80.7" lengthAdjust="spacingAndGlyphs">For<tspan text-decoration="underline">m</tspan>at columns</text>
<rect x="956.7" y="213.8" width="12" height="12" fill="#fff" stroke="#333" stroke-width="1"/>
<text x="976.6" y="224.2" font-size="12" fill="#000" textLength="62.6" lengthAdjust="spacingAndGlyphs">Format <tspan text-decoration="underline">r</tspan>ows</text>
<rect x="956.7" y="229.8" width="12" height="12" fill="#fff" stroke="#333" stroke-width="1"/>
<text x="976.6" y="240.2" font-size="12" fill="#000" textLength="73.7" lengthAdjust="spacingAndGlyphs"><tspan text-decoration="underline">I</tspan>nsert columns</text>
<rect x="956.7" y="245.8" width="12" height="12" fill="#fff" stroke="#333" stroke-width="1"/>
<text x="976.6" y="256.2" font-size="12" fill="#000" textLength="55.8" lengthAdjust="spacingAndGlyphs">I<tspan text-decoration="underline">n</tspan>sert rows</text>
<rect x="956.7" y="261.8" width="12" height="12" fill="#fff" stroke="#333" stroke-width="1"/>
<text x="976.6" y="272.2" font-size="12" fill="#000" textLength="83.5" lengthAdjust="spacingAndGlyphs">Insert <tspan text-decoration="underline">h</tspan>yperlinks</text>
<rect x="956.7" y="277.8" width="12" height="12" fill="#fff" stroke="#333" stroke-width="1"/>
<text x="976.6" y="288.2" font-size="12" fill="#000" textLength="78.0" lengthAdjust="spacingAndGlyphs"><tspan text-decoration="underline">D</tspan>elete columns</text>
<rect x="956.7" y="293.8" width="12" height="12" fill="#fff" stroke="#333" stroke-width="1"/>
<text x="976.6" y="304.2" font-size="12" fill="#000" textLength="59.8" lengthAdjust="spacingAndGlyphs">Delete ro<tspan text-decoration="underline">w</tspan>s</text>
<rect x="956.7" y="309.8" width="12" height="12" fill="#fff" stroke="#333" stroke-width="1"/>
<text x="976.6" y="320.2" font-size="12" fill="#000" textLength="20.4" lengthAdjust="spacingAndGlyphs"><tspan text-decoration="underline">S</tspan>ort</text>
<rect x="956.7" y="325.8" width="12" height="12" fill="#fff" stroke="#333" stroke-width="1"/>
<text x="976.6" y="336.2" font-size="12" fill="#000" textLength="72.2" lengthAdjust="spacingAndGlyphs">Use <tspan text-decoration="underline">A</tspan>utoFilter</text>
<rect x="956.7" y="341.8" width="12" height="12" fill="#fff" stroke="#333" stroke-width="1"/>
<text x="976.6" y="352.2" font-size="12" fill="#000" textLength="152.9" lengthAdjust="spacingAndGlyphs">Use Pi<tspan text-decoration="underline">v</tspan>otTable and PivotChart</text>
<rect x="956.7" y="357.8" width="12" height="12" fill="#fff" stroke="#333" stroke-width="1"/>
<text x="976.6" y="368.2" font-size="12" fill="#000" textLength="58.8" lengthAdjust="spacingAndGlyphs">Edit <tspan text-decoration="underline">o</tspan>bjects</text>
<rect x="956.7" y="373.8" width="12" height="12" fill="#fff" stroke="#333" stroke-width="1"/>
<text x="976.6" y="384.2" font-size="12" fill="#000" textLength="69.7" lengthAdjust="spacingAndGlyphs"><tspan text-decoration="underline">E</tspan>dit scenarios</text>
<text x="1087.9" y="438.8" font-size="12" fill="#000" textLength="14.1" lengthAdjust="spacingAndGlyphs">OK</text>
<text x="1161.3" y="438.8" font-size="12" fill="#000" textLength="33.2" lengthAdjust="spacingAndGlyphs">Cancel</text>
<rect x="1218" y="443.5" width="1.6" height="1.6" fill="#b0b0b0"/>
<rect x="1218" y="446.5" width="1.6" height="1.6" fill="#b0b0b0"/>
<rect x="1218" y="449.5" width="1.6" height="1.6" fill="#b0b0b0"/>
<rect x="1215" y="446.5" width="1.6" height="1.6" fill="#b0b0b0"/>
<rect x="1215" y="449.5" width="1.6" height="1.6" fill="#b0b0b0"/>
<rect x="1212" y="449.5" width="1.6" height="1.6" fill="#b0b0b0"/>
</svg>
</div></body></html>
